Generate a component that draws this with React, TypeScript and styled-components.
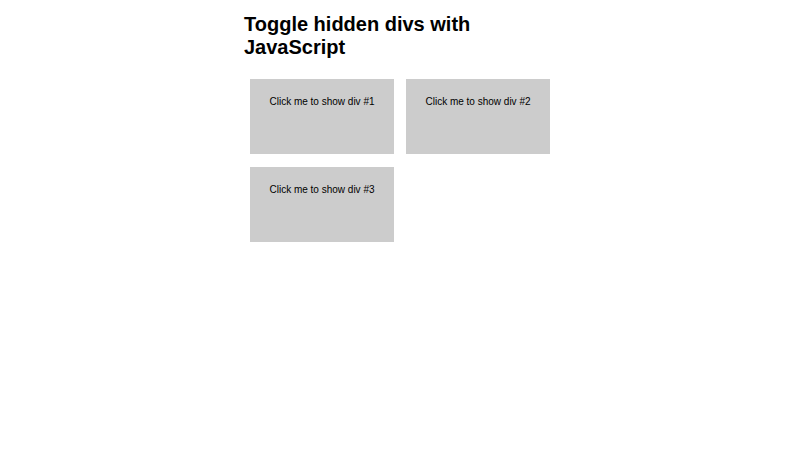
import React, { useState } from "react";
import styled, { createGlobalStyle } from "styled-components";

const GlobalStyle = createGlobalStyle`
  html, body {
    margin: 0;
    padding: 0;
    background: #ffffff;
  }
  body {
    font-family: "Liberation Sans", Arial, sans-serif;
    color: #000;
  }
`;

const Page = styled.div`
  width: 312px;
  margin: 0 auto;
  padding-top: 13px;
`;

const Title = styled.h1`
  margin: 0 0 14px;
  font-size: 20px;
  line-height: 23px;
  font-weight: bold;
`;

const Grid = styled.div`
  display: grid;
  grid-template-columns: repeat(2, 144px);
  column-gap: 12px;
  row-gap: 13px;
  padding: 6px;
`;

const Tile = styled.div<{ $open?: boolean }>`
  height: 75px;
  box-sizing: border-box;
  padding-top: 17px;
  background: #cccccc;
  font-size: 10px;
  line-height: 11.5px;
  text-align: center;
  cursor: pointer;
`;

const Hidden = styled.div`
  margin-top: 8px;
  font-size: 10px;
`;

const items = [1, 2, 3];

export default function App() {
  const [open, setOpen] = useState<number | null>(null);

  return (
    <>
      <GlobalStyle />
      <Page>
        <Title>Toggle hidden divs with JavaScript</Title>
        <Grid>
          {items.map((n) => (
            <Tile
              key={n}
              $open={open === n}
              onClick={() => setOpen(open === n ? null : n)}
            >
              Click me to show div #{n}
              {open === n && <Hidden>This is div #{n}</Hidden>}
            </Tile>
          ))}
        </Grid>
      </Page>
    </>
  );
}
